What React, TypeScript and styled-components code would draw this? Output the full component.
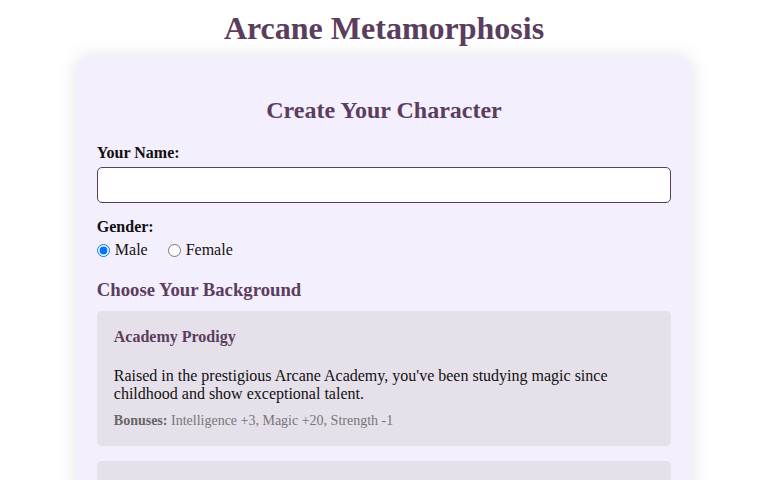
import React, { useState } from "react";
import styled, { createGlobalStyle } from "styled-components";

const GlobalStyle = createGlobalStyle`
  body {
    margin: 0;
    background-color: white;
    font-family: "Liberation Serif", "Times New Roman", serif;
    color: #111;
  }
`;

const Title = styled.h1`
  margin: 10px 0;
  text-align: center;
  font-size: 32px;
  color: #5b3d5e;
`;

const Container = styled.div`
  width: 80%;
  margin: 0 auto;
  padding: 20px;
  box-sizing: border-box;
  background-color: #f4effd;
  border-radius: 10px;
  box-shadow: 0 0 20px rgba(0, 0, 0, 0.12);
`;

const SectionTitle = styled.h2`
  margin: 20px 0 20px;
  text-align: center;
  font-size: 24px;
  color: #5b3d5e;
`;

const FormGroup = styled.div`
  margin-bottom: 15px;
`;

const Label = styled.label`
  display: block;
  font-weight: bold;
  margin-bottom: 5px;
`;

const TextInput = styled.input`
  display: block;
  width: 100%;
  height: 36px;
  box-sizing: border-box;
  padding: 8px;
  font-family: inherit;
  font-size: 16px;
  border: 1px solid #5b3d5e;
  border-radius: 5px;
  background: white;
`;

const RadioRow = styled.div`
  display: flex;
  align-items: center;
`;

const RadioOption = styled.label`
  display: flex;
  align-items: center;
  margin-right: 20px;

  input {
    margin: 0 5px 0 0;
  }
`;

const SubTitle = styled.h3`
  margin: 20px 0 10px;
  font-size: 18.72px;
  color: #5b3d5e;
`;

const BackgroundCard = styled.div<{ $selected?: boolean }>`
  padding: 15px;
  margin-bottom: 15px;
  border: 2px solid ${(p) => (p.$selected ? "#5b3d5e" : "transparent")};
  border-radius: 5px;
  background-color: #e6e0ea;
  cursor: pointer;
`;

const CardTitle = styled.div`
  margin: 0 0 21px;
  font-weight: bold;
  font-size: 16px;
  color: #5b3d5e;
`;

const Description = styled.p`
  margin: 0 0 10px;
  font-size: 16px;
`;

const Bonuses = styled.div`
  font-size: 14px;
  color: #777;

  strong {
    color: #666;
  }
`;

interface Background {
  name: string;
  description: string;
  bonuses: string;
}

const backgrounds: Background[] = [
  {
    name: "Academy Prodigy",
    description:
      "Raised in the prestigious Arcane Academy, you've been studying magic since childhood and show exceptional talent.",
    bonuses: "Intelligence +3, Magic +20, Strength -1",
  },
  {
    name: "Wild Mage",
    description:
      "Your magic awakened suddenly and without warning. Untrained but powerful, your abilities are unpredictable.",
    bonuses: "Magic +30, Control -2, Charisma +1",
  },
];

const App = () => {
  const [name, setName] = useState("");
  const [gender, setGender] = useState("male");
  const [selected, setSelected] = useState<number | null>(null);

  return (
    <>
      <GlobalStyle />
      <Title>Arcane Metamorphosis</Title>
      <Container>
        <SectionTitle>Create Your Character</SectionTitle>
        <FormGroup>
          <Label htmlFor="name">Your Name:</Label>
          <TextInput id="name" value={name} onChange={(e) => setName(e.target.value)} />
        </FormGroup>
        <FormGroup>
          <Label>Gender:</Label>
          <RadioRow>
            <RadioOption>
              <input
                type="radio"
                name="gender"
                checked={gender === "male"}
                onChange={() => setGender("male")}
              />
              Male
            </RadioOption>
            <RadioOption>
              <input
                type="radio"
                name="gender"
                checked={gender === "female"}
                onChange={() => setGender("female")}
              />
              Female
            </RadioOption>
          </RadioRow>
        </FormGroup>
        <SubTitle>Choose Your Background</SubTitle>
        {backgrounds.map((bg, i) => (
          <BackgroundCard key={bg.name} $selected={selected === i} onClick={() => setSelected(i)}>
            <CardTitle>{bg.name}</CardTitle>
            <Description>{bg.description}</Description>
            <Bonuses>
              <strong>Bonuses:</strong> {bg.bonuses}
            </Bonuses>
          </BackgroundCard>
        ))}
      </Container>
    </>
  );
};

export default App;
